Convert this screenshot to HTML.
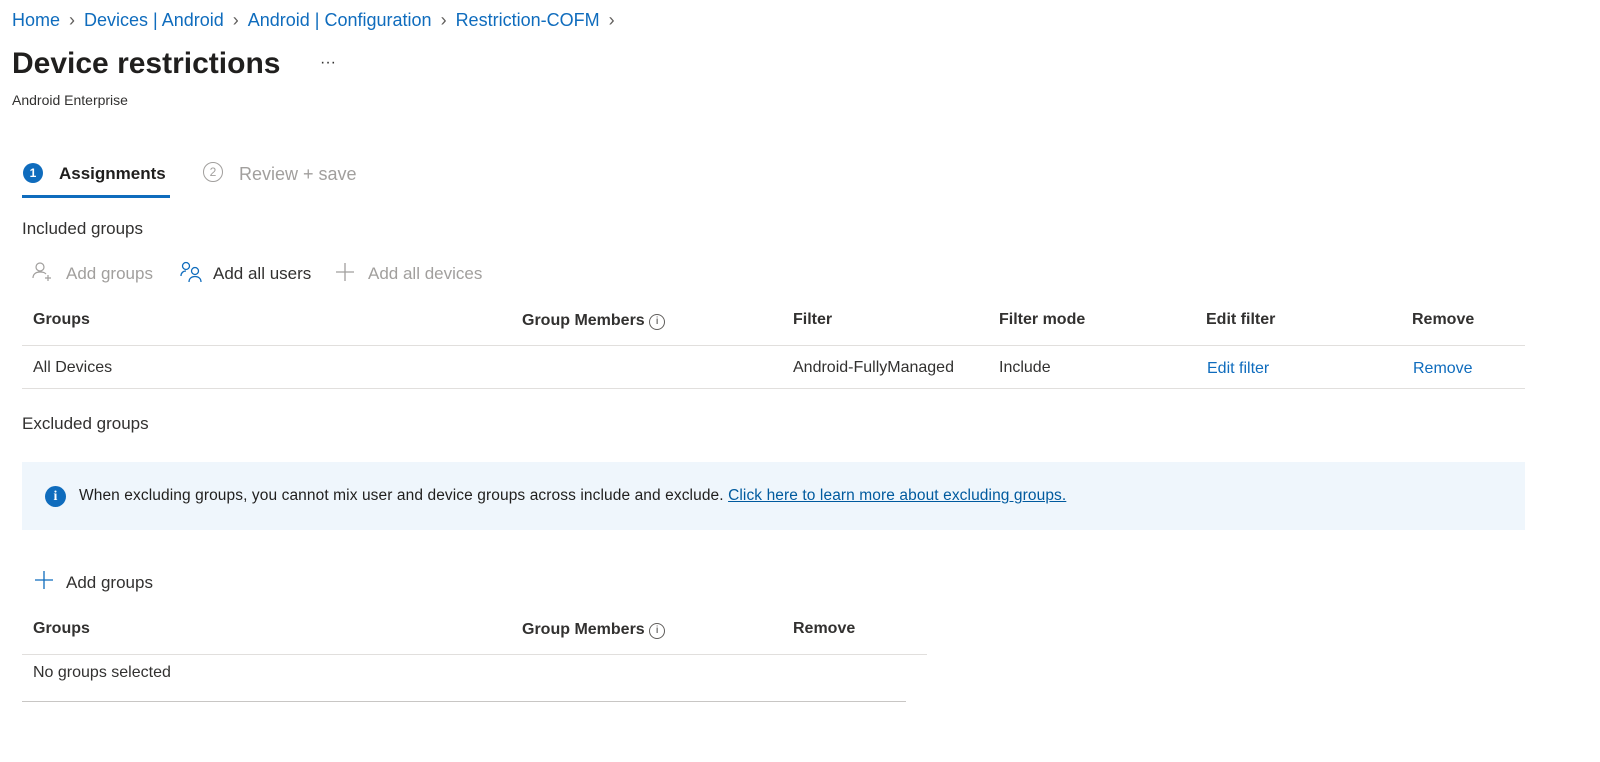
<!DOCTYPE html>
<html><head><meta charset="utf-8"><style>
body{margin:0;width:1600px;height:762px;background:#fff;font-family:"Liberation Sans",sans-serif;color:#323130;position:relative;overflow:hidden}
.a{position:absolute;white-space:nowrap}
.bl{color:#0f6cbd}
.hd{font-weight:bold;font-size:16px;color:#323130}
.t{font-size:16px}
.line{position:absolute;height:1px;background:#e1dfdd}
.sep{color:#605e5c;margin:0 9px}
</style></head><body>
<div class="a bl" style="left:12px;top:10px;font-size:18px">Home<span class="sep">›</span>Devices | Android<span class="sep">›</span>Android | Configuration<span class="sep">›</span>Restriction-COFM<span class="sep">›</span></div>
<div class="a" style="left:12px;top:47px;font-size:30px;font-weight:bold;color:#201f1e">Device restrictions</div>
<div class="a" style="left:320px;top:54px;font-size:16px;color:#323130">···</div>
<div class="a" style="left:12px;top:92px;font-size:14px;color:#323130">Android Enterprise</div>

<div class="a" style="left:23px;top:163px;width:20px;height:20px;border-radius:50%;background:#0f6cbd;color:#fff;font-size:12px;font-weight:bold;text-align:center;line-height:20px">1</div>
<div class="a" style="left:59px;top:164px;font-size:17px;font-weight:bold;color:#201f1e">Assignments</div>
<div class="a" style="left:22px;top:195px;width:148px;height:3px;background:#0f6cbd"></div>
<div class="a" style="left:203px;top:162px;width:20px;height:20px;border-radius:50%;border:1px solid #a19f9d;box-sizing:border-box;color:#a19f9d;font-size:12px;text-align:center;line-height:18px">2</div>
<div class="a" style="left:239px;top:164px;font-size:18px;color:#a19f9d">Review + save</div>

<div class="a t" style="left:22px;top:219px;font-size:17px">Included groups</div>
<svg class="a" style="left:32px;top:261px" width="22" height="22" viewBox="0 0 22 22" fill="none" stroke="#a19f9d" stroke-width="1.2"><circle cx="8" cy="6" r="4"/><path d="M1 17c0-4 3-6 7-6s5 1 6 2"/><path d="M16 14v6M13 17h6"/></svg>
<div class="a t" style="left:66px;top:264px;color:#a19f9d;font-size:17px">Add groups</div>
<svg class="a" style="left:180px;top:261px" width="24" height="22" viewBox="0 0 24 22" fill="none" stroke="#0f6cbd" stroke-width="1.3"><circle cx="6" cy="5" r="3.5"/><path d="M1 15c0-3 2-5 5-5"/><circle cx="15" cy="10" r="3.5"/><path d="M9 21c0-3.5 2.5-5.5 6-5.5s6 2 6 5.5"/></svg>
<div class="a t" style="left:213px;top:264px;font-size:17px">Add all users</div>
<svg class="a" style="left:335px;top:262px" width="20" height="20" viewBox="0 0 20 20" stroke="#a19f9d" stroke-width="1.3"><path d="M10 1v18M1 10h18"/></svg>
<div class="a t" style="left:368px;top:264px;color:#a19f9d;font-size:17px">Add all devices</div>

<div class="a hd" style="left:33px;top:311px">Groups</div>
<div class="a hd" style="left:522px;top:312px">Group Members <span style="display:inline-block;width:14px;height:14px;border:1px solid #605e5c;border-radius:50%;font-size:10px;font-weight:normal;text-align:center;line-height:14px;vertical-align:1px">i</span></div>
<div class="a hd" style="left:793px;top:311px">Filter</div>
<div class="a hd" style="left:999px;top:311px">Filter mode</div>
<div class="a hd" style="left:1206px;top:311px">Edit filter</div>
<div class="a hd" style="left:1412px;top:311px">Remove</div>
<div class="line" style="left:22px;top:345px;width:1503px"></div>
<div class="a t" style="left:33px;top:359px">All Devices</div>
<div class="a t" style="left:793px;top:359px">Android-FullyManaged</div>
<div class="a t" style="left:999px;top:359px">Include</div>
<div class="a t bl" style="left:1207px;top:360px">Edit filter</div>
<div class="a t bl" style="left:1413px;top:360px">Remove</div>
<div class="line" style="left:22px;top:388px;width:1503px"></div>

<div class="a t" style="left:22px;top:414px;font-size:17px">Excluded groups</div>
<div class="a" style="left:22px;top:462px;width:1503px;height:68px;background:#eff6fc"></div>
<div class="a" style="left:45px;top:486px;width:21px;height:21px;border-radius:50%;background:#0f6cbd;color:#fff;font-weight:bold;font-size:14px;text-align:center;line-height:21px;font-family:'Liberation Serif',serif">i</div>
<div class="a" style="left:79px;top:487px;font-size:15.5px;color:#201f1e;letter-spacing:0.1px">When excluding groups, you cannot mix user and device groups across include and exclude. <span style="color:#005a9e;text-decoration:underline">Click here to learn more about excluding groups.</span></div>

<svg class="a" style="left:34px;top:570px" width="20" height="20" viewBox="0 0 20 20" stroke="#0f6cbd" stroke-width="1.3"><path d="M10 1v18M1 10h18"/></svg>
<div class="a t" style="left:66px;top:573px;font-size:17px">Add groups</div>
<div class="a hd" style="left:33px;top:620px">Groups</div>
<div class="a hd" style="left:522px;top:621px">Group Members <span style="display:inline-block;width:14px;height:14px;border:1px solid #605e5c;border-radius:50%;font-size:10px;font-weight:normal;text-align:center;line-height:14px;vertical-align:1px">i</span></div>
<div class="a hd" style="left:793px;top:620px">Remove</div>
<div class="line" style="left:22px;top:654px;width:905px"></div>
<div class="a t" style="left:33px;top:664px">No groups selected</div>
<div class="line" style="left:22px;top:701px;width:884px;background:#c8c6c4"></div>
</body></html>
